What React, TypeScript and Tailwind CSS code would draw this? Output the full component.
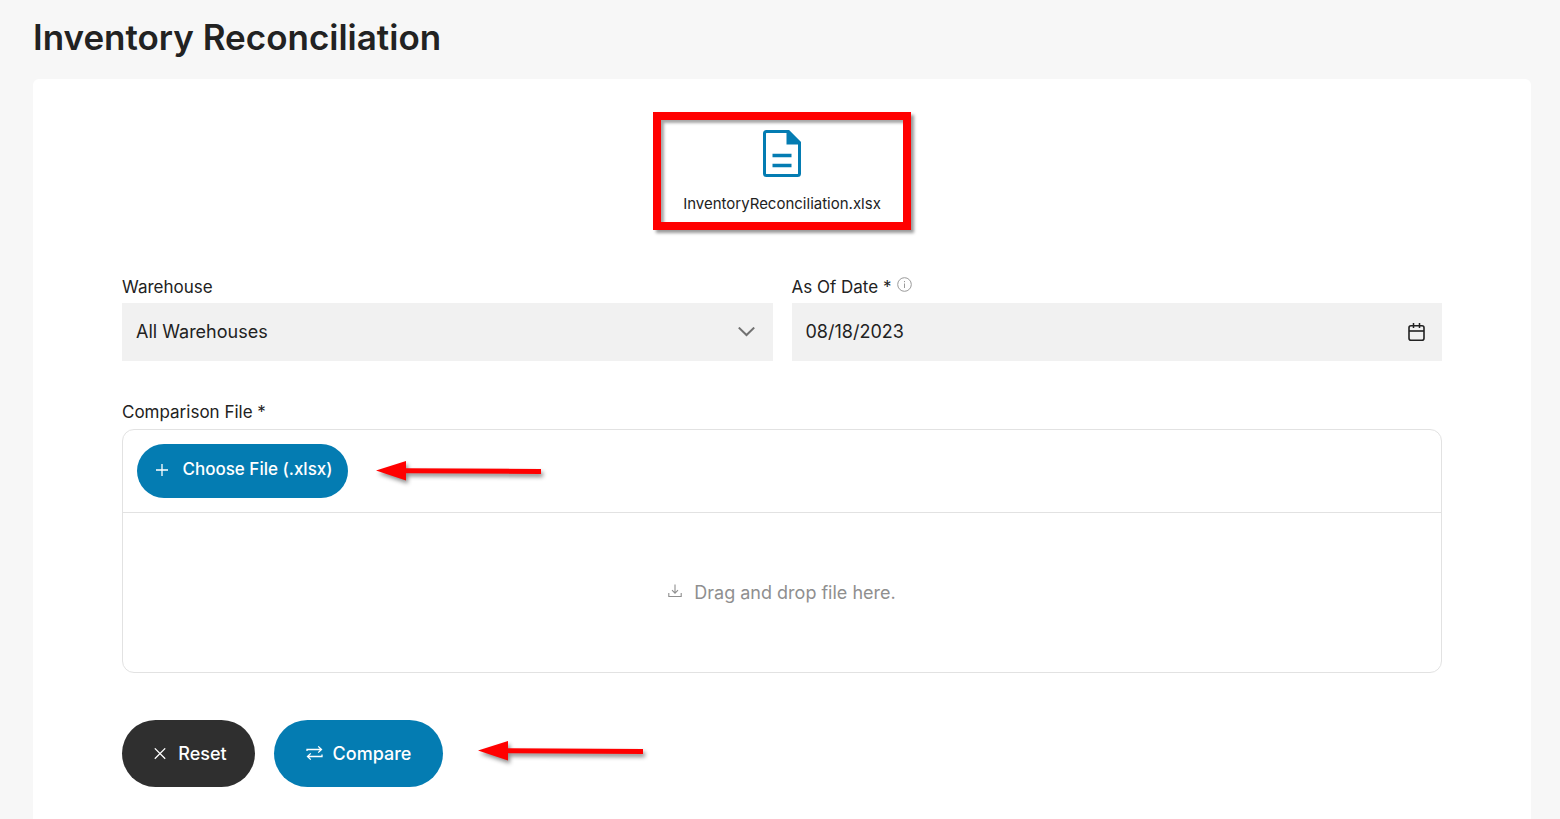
import { useRef, useState } from "react";

function FileIcon() {
  return (
    <svg width="38" height="47" viewBox="0 0 38 47" aria-hidden="true">
      <path d="M3.5 1.5H25L36.5 13V43.5Q36.5 45.5 34.5 45.5H3.5Q1.5 45.5 1.5 43.5V3.5Q1.5 1.5 3.5 1.5Z" fill="#fff" stroke="#047cb2" strokeWidth="3" />
      <path d="M23.5 0H26L38 12V14.5H23.5Z" fill="#047cb2" />
      <path d="M9.5 25.5H28.5M9.5 35.5H28.5" stroke="#047cb2" strokeWidth="3.4" />
    </svg>
  );
}

function Chevron() {
  return (
    <svg width="17" height="10" viewBox="0 0 17 10" fill="none" stroke="#717171" strokeWidth="2" aria-hidden="true" className="pointer-events-none mr-[18px] self-center justify-self-end [grid-area:1/1]">
      <path d="M.8 .6L8.5 8L16.2 .6" />
    </svg>
  );
}

function InfoIcon() {
  return (
    <svg width="15" height="15" viewBox="0 0 15 15" fill="none" stroke="#999" aria-hidden="true">
      <circle cx="7.5" cy="7.5" r="6.8" />
      <path d="M7.5 6.5V11M7.5 4V5.2" />
    </svg>
  );
}

function CalendarIcon() {
  return (
    <svg width="17" height="19" viewBox="0 0 17 19" fill="none" stroke="#222" aria-hidden="true">
      <rect x="1" y="2.7" width="15" height="14.6" rx="2" strokeWidth="1.6" />
      <path d="M1 8H16" strokeWidth="1.6" />
      <path d="M5.5 0V5M11.5 0V5" strokeWidth="1.5" />
    </svg>
  );
}

function PlusIcon() {
  return (
    <svg width="12" height="12" viewBox="0 0 12 12" stroke="#fff" strokeWidth="1.3" aria-hidden="true">
      <path d="M6 0V12M0 6H12" />
    </svg>
  );
}

function CloseIcon() {
  return (
    <svg width="12" height="12" viewBox="0 0 12 12" stroke="#fff" strokeWidth="1.3" aria-hidden="true">
      <path d="M.8 .4L11.2 10.8M11.2 .4L.8 10.8" />
    </svg>
  );
}

function SwapIcon() {
  return (
    <svg width="17" height="15" viewBox="0 0 17 15" fill="none" stroke="#fff" strokeWidth="1.3" aria-hidden="true">
      <path d="M1 5V3.5H15.5M12.2 .4L15.5 3.5L12.2 6.6M16 8.5V10.5H1.5M4.8 7.4L1.5 10.5L4.8 13.6" />
    </svg>
  );
}

function DownloadIcon() {
  return (
    <svg width="14" height="18" viewBox="0 0 14 18" fill="none" stroke="#8f8f8f" strokeWidth="1.1" aria-hidden="true">
      <path d="M7 .5V9M4 6.2L7 9.2L10 6.2M.8 9V12.5H13.2V9" />
    </svg>
  );
}

function Arrow() {
  return (
    <svg width="172" height="28" viewBox="0 0 172 28" aria-hidden="true" className="shrink-0 [filter:drop-shadow(2px_3px_2px_rgb(0_0_0/0.45))]">
      <path d="M0 13.5L30 4V11.3L165 12V17L30 16.3V23.5Z" fill="#f00" />
    </svg>
  );
}

export default function App() {
  const picker = useRef<HTMLInputElement>(null);
  const [warehouse, setWarehouse] = useState("All Warehouses");
  const [date, setDate] = useState("08/18/2023");

  return (
    <div className="flex min-h-screen flex-col bg-[#f7f7f7] pr-[29px] pl-[33px] font-['Inter',sans-serif] text-[#222]">
      <h1 className="pt-[11px] pb-4 text-[35px] leading-[52px] font-semibold">Inventory Reconciliation</h1>
      <main className="flex-1 rounded-t-md bg-white px-4 pt-[33px] pb-8 md:px-[89px]">
        <div className="flex justify-center">
          <a
            href="#template"
            className="flex h-[118px] w-[258px] flex-col items-center border-8 border-[#f00] pt-[10px] text-[15px] leading-5 shadow-[3px_3px_3px_rgb(0_0_0/0.4),inset_3px_3px_3px_rgb(0_0_0/0.35)]"
          >
            <FileIcon />
            <span className="mt-[17px]">InventoryReconciliation.xlsx</span>
          </a>
        </div>

        <form onSubmit={(e) => e.preventDefault()}>
          <div className="mt-[45px] grid gap-[19px] md:grid-cols-2">
            <div>
              <label htmlFor="warehouse" className="mb-1 block text-[17px] leading-6">Warehouse</label>
              <div className="grid">
                <select
                  id="warehouse"
                  value={warehouse}
                  onChange={(e) => setWarehouse(e.target.value)}
                  className="h-[58px] w-full appearance-none bg-[#f1f1f1] px-[14px] pb-[2px] text-[18px] [grid-area:1/1]"
                >
                  <option>All Warehouses</option>
                </select>
                <Chevron />
              </div>
            </div>
            <div>
              <div className="mb-1 flex h-6 items-start gap-[6px]">
                <label htmlFor="date" className="text-[17px] leading-6">As Of Date *</label>
                <span className="pt-[2px]">
                  <InfoIcon />
                </span>
              </div>
              <div className="flex h-[58px] items-center bg-[#f1f1f1]">
                <input
                  id="date"
                  value={date}
                  onChange={(e) => setDate(e.target.value)}
                  className="h-full min-w-0 flex-1 px-[14px] pb-[2px] text-[18px]"
                />
                <button type="button" aria-label="Open calendar" className="mr-[17px]">
                  <CalendarIcon />
                </button>
              </div>
            </div>
          </div>

          <label htmlFor="file" className="mt-[39px] mb-[5px] block text-[17px] leading-6">Comparison File *</label>
          <input ref={picker} id="file" type="file" accept=".xlsx" className="hidden" />
          <div className="rounded-xl border border-[#e2e2e2]">
            <div className="flex items-center border-b border-[#e2e2e2] p-[14px]">
              <button
                type="button"
                onClick={() => picker.current?.click()}
                className="flex h-[54px] w-[211px] items-center justify-center gap-[14px] rounded-full bg-[#047cb2] pb-[2px] pl-1 text-[17px] font-medium whitespace-nowrap text-white"
              >
                <PlusIcon />
                Choose File (.xlsx)
              </button>
              <div className="ml-7">
                <Arrow />
              </div>
            </div>
            <div className="flex h-[159px] items-center justify-center gap-3 text-[18px] text-[#8f8f8f]">
              <DownloadIcon />
              Drag and drop file here.
            </div>
          </div>

          <div className="mt-[47px] flex flex-wrap items-center gap-[19px]">
            <button type="reset" className="flex h-[67px] w-[133px] items-center justify-center gap-3 rounded-full bg-[#2f2f2f] pl-1 text-[18px] font-medium text-white">
              <CloseIcon />
              Reset
            </button>
            <button type="submit" className="flex h-[67px] w-[169px] items-center justify-center gap-[10px] rounded-full bg-[#047cb2] text-[18px] font-medium text-white">
              <SwapIcon />
              Compare
            </button>
            <div className="ml-4 pb-[6px]">
              <Arrow />
            </div>
          </div>
        </form>
      </main>
    </div>
  );
}
